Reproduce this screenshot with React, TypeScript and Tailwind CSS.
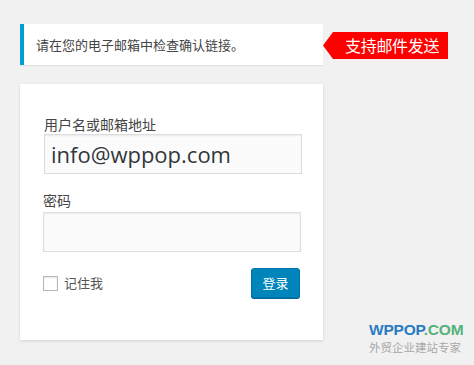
import React from "react";

const cjk = { fontFamily: '"Noto Sans CJK SC", "Noto Sans", sans-serif' };

export default function App() {
  return (
    <div
      className="relative w-[474px] h-[365px] bg-[#f1f1f1] overflow-hidden"
      style={cjk}
    >
      <div className="flex pt-[24px] pl-[20px]">
        <div className="flex flex-col w-[303px]">
          <div className="h-[41px] bg-white border-l-[4px] border-[#00a0d2] shadow-[0_1px_1px_rgba(0,0,0,0.06)] flex items-center pl-[12px] text-[13px] text-[#444]">
            请在您的电子邮箱中检查确认链接。
          </div>
          <div className="mt-[19px] bg-white shadow-[0_1px_3px_rgba(0,0,0,0.13)] pt-[30px] pb-[42px] px-[24px] flex flex-col">
            <label className="text-[14px] leading-[20px] text-[#444]">用户名或邮箱地址</label>
            <div className="h-[40px] w-[258px] border border-[#ddd] bg-[#fbfbfb] shadow-[inset_0_1px_2px_rgba(0,0,0,0.07)] flex items-center pl-[6px] text-[22px] text-[#32373c]" style={{ fontFamily: '"Open Sans", "Noto Sans", sans-serif' }}>
              info@wppop.com
            </div>
            <label className="mt-[16px] mb-[2px] text-[14px] leading-[20px] text-[#444] -ml-[1px]">密码</label>
            <div className="h-[40px] w-[258px] -ml-[1px] border border-[#ddd] bg-[#fbfbfb] shadow-[inset_0_1px_2px_rgba(0,0,0,0.07)]" />
            <div className="mt-[16px] flex items-center justify-between -ml-[1px] w-[257px]">
              <div className="flex items-center">
                <div className="w-[15px] h-[15px] border border-[#b4b9be] bg-white shadow-[inset_0_1px_2px_rgba(0,0,0,0.1)]" />
                <span className="ml-[6px] text-[13px] text-[#555]">记住我</span>
              </div>
              <div className="h-[30px] w-[49px] rounded-[3px] bg-[#0085ba] border border-[#0073aa] shadow-[0_1px_0_#006799] flex items-center justify-center text-[13px] text-white">
                登录
              </div>
            </div>
          </div>
        </div>
        <div className="mt-[8px] flex h-[27px]">
          <svg width="10" height="27" viewBox="0 0 10 27" className="block">
            <polygon points="10,0 10,27 0,13.5" fill="#f00" />
          </svg>
          <div className="w-[115px] h-[27px] bg-[#f00] text-white text-[16px] leading-[27px] pl-[12px] tracking-[-0.3px]">
            支持邮件发送
          </div>
        </div>
      </div>
      <div className="absolute left-[369px] top-[322px] flex flex-col">
        <div className="text-[15.5px] leading-[16px] font-bold tracking-[-0.2px]" style={{ fontFamily: '"Liberation Sans", Arial, sans-serif' }}>
          <span className="text-[#2a7cc0]">WPPOP</span>
          <span className="text-[#55b27a]">.COM</span>
        </div>
        <div className="mt-[2px] text-[11.5px] leading-[14px] text-[#a8a8a8]">外贸企业建站专家</div>
      </div>
    </div>
  );
}
